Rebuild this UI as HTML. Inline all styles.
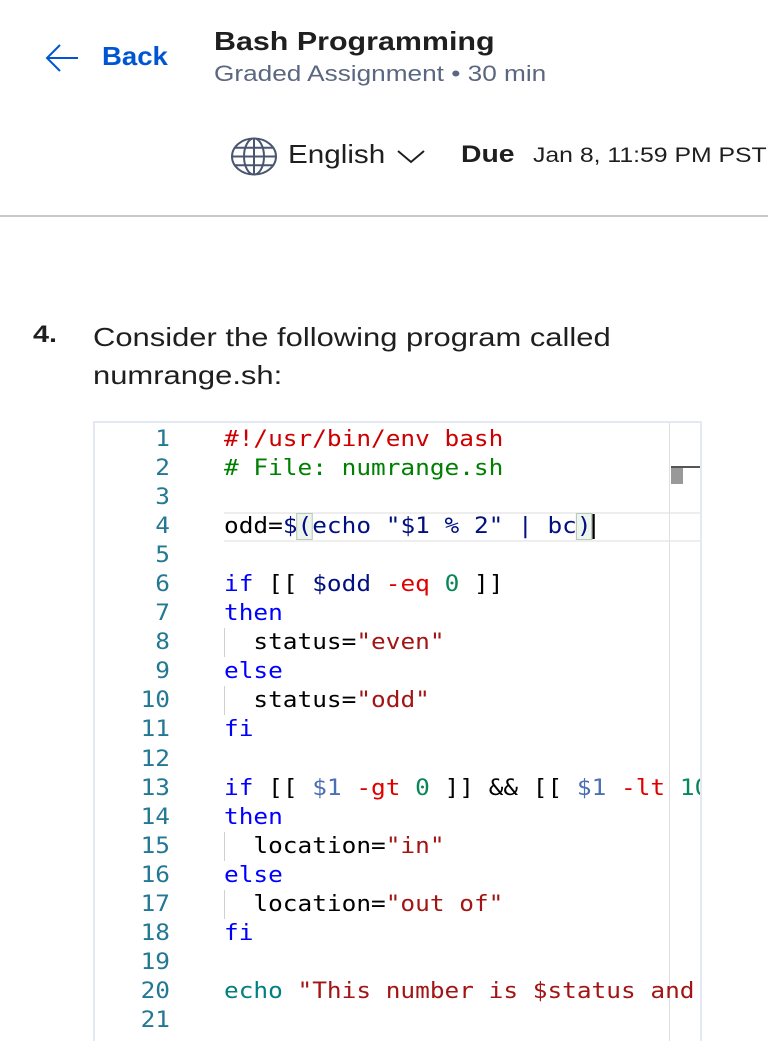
<!DOCTYPE html>
<html><head><meta charset="utf-8"><style>
*{margin:0;padding:0;box-sizing:border-box}
body{width:768px;height:1024px;overflow:hidden;background:#fff;font-family:"Liberation Sans",sans-serif;position:relative}
.a{position:absolute;white-space:nowrap;transform-origin:0 50%}
.code{position:absolute;left:93px;top:421px;width:609px;height:620px;border:2px solid #e3e8f2;border-bottom:none;overflow:hidden}
.ln{position:absolute;left:0;width:75px;text-align:right;top:1.5px;font:22px/29.1px "DejaVu Sans Mono",monospace;color:#237893;transform:scaleX(1.11);transform-origin:100% 0}
.tx{position:absolute;left:129px;top:1.5px;width:430px;overflow:hidden;font:22px/29.1px "DejaVu Sans Mono",monospace;color:#000;white-space:pre;transform:scaleX(1.11);transform-origin:0 0}
.k{color:#0000ff}.s{color:#a31515}.r{color:#e00000}.g{color:#008000}.n{color:#098658}.v{color:#4a6fb5}.d{color:#001080}.e{color:#00807f}.sh{color:#cc0000}
.guide{position:absolute;left:129px;width:1px;height:29px;background:#d0d0d0}
</style></head><body>
<svg class="a" style="left:44px;top:42px" width="36" height="32" viewBox="0 0 36 32"><path d="M34 16H4M16 3L3 16l13 13" fill="none" stroke="#0056d2" stroke-width="2"/></svg>
<div class="a" style="left:102px;top:41px;font-size:26px;font-weight:bold;color:#0056d2;transform:scaleX(1.06)">Back</div>
<div class="a" style="left:214px;top:26px;font-size:26px;font-weight:bold;color:#1f1f1f;transform:scaleX(1.17)">Bash Programming</div>
<div class="a" style="left:214px;top:61px;font-size:22px;color:#5b6780;transform:scaleX(1.19)">Graded Assignment • 30 min</div>
<svg class="a" style="left:230px;top:137px" width="48" height="39" viewBox="0 0 48 40" preserveAspectRatio="none"><g fill="none" stroke="#4a5670" stroke-width="2"><ellipse cx="24" cy="20" rx="22" ry="18.5"/><ellipse cx="24" cy="20" rx="10" ry="18.5"/><path d="M2 20h44M5 11h38M5 29h38M24 1.5v37"/></g></svg>
<div class="a" style="left:288px;top:139px;font-size:26px;color:#1f1f1f;transform:scaleX(1.14)">English</div>
<svg class="a" style="left:396px;top:148px" width="32" height="16" viewBox="0 0 32 16"><path d="M2 3l13 11L28 3" fill="none" stroke="#1f1f1f" stroke-width="2"/></svg>
<div class="a" style="left:461px;top:141px;font-size:24px;font-weight:bold;color:#1f1f1f;transform:scaleX(1.18)">Due</div>
<div class="a" style="left:533px;top:144px;font-size:21px;color:#1f1f1f;transform:scaleX(1.18)">Jan 8, 11:59 PM PST</div>
<div class="a" style="left:0;top:215px;width:768px;height:2px;background:#c8c8c8"></div>
<div class="a" style="left:33px;top:321px;font-size:24px;font-weight:bold;color:#1f1f1f;transform:scaleX(1.2)">4.</div>
<div class="a" style="left:93px;top:318px;font-size:26px;line-height:38px;color:#1f1f1f;transform:scaleX(1.19);transform-origin:0 0">Consider the following program called<br>numrange.sh:</div>
<div class="code">
<div style="position:absolute;left:129px;top:89px;width:480px;height:30px;border-top:2px solid #eee;border-bottom:2px solid #eee"></div>
<div style="position:absolute;left:574px;top:0;width:1px;height:620px;background:#e0e0e0"></div>
<div style="position:absolute;left:576px;top:43px;width:30px;height:2px;background:#555"></div>
<div style="position:absolute;left:576px;top:45px;width:12px;height:16px;background:#999"></div>
<div class="guide" style="top:205px"></div><div class="guide" style="top:263px"></div>
<div class="guide" style="top:409px"></div><div class="guide" style="top:467px"></div>
<div class="ln">1<br>2<br>3<br>4<br>5<br>6<br>7<br>8<br>9<br>10<br>11<br>12<br>13<br>14<br>15<br>16<br>17<br>18<br>19<br>20<br>21</div>
<div class="tx"><span class="sh">#!/usr/bin/env bash</span>
<span class="g"># File: numrange.sh</span>

odd=<span class="d">$<span style="outline:1px solid #b9c9b9;background:#eef4ee">(</span>echo "$1 % 2" | bc<span style="outline:1px solid #b9c9b9;background:#eef4ee">)</span></span><span style="border-left:3px solid #000"></span>

<span class="k">if</span> [[ <span class="d">$odd</span> <span class="r">-eq</span> <span class="n">0</span> ]]
<span class="k">then</span>
  status=<span class="s">"even"</span>
<span class="k">else</span>
  status=<span class="s">"odd"</span>
<span class="k">fi</span>

<span class="k">if</span> [[ <span class="v">$1</span> <span class="r">-gt</span> <span class="n">0</span> ]] &amp;&amp; [[ <span class="v">$1</span> <span class="r">-lt</span> <span class="n">100</span> ]]
<span class="k">then</span>
  location=<span class="s">"in"</span>
<span class="k">else</span>
  location=<span class="s">"out of"</span>
<span class="k">fi</span>

<span class="e">echo</span> <span class="s">"This number is $status and</span>
</div>
</div>
</body></html>
